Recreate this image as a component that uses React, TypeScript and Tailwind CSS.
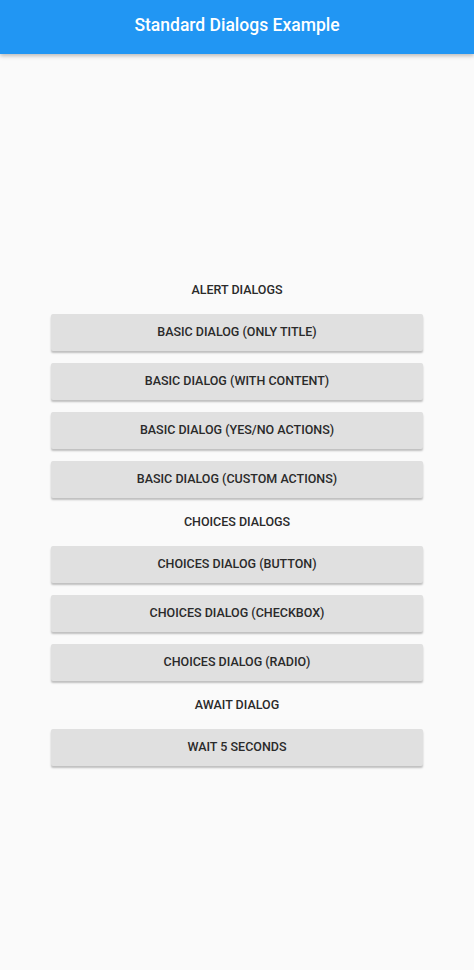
const groups = [
  {
    title: "ALERT DIALOGS",
    buttons: [
      "BASIC DIALOG (ONLY TITLE)",
      "BASIC DIALOG (WITH CONTENT)",
      "BASIC DIALOG (YES/NO ACTIONS)",
      "BASIC DIALOG (CUSTOM ACTIONS)",
    ],
  },
  {
    title: "CHOICES DIALOGS",
    buttons: ["CHOICES DIALOG (BUTTON)", "CHOICES DIALOG (CHECKBOX)", "CHOICES DIALOG (RADIO)"],
  },
  {
    title: "AWAIT DIALOG",
    buttons: ["WAIT 5 SECONDS"],
  },
];

export default function App() {
  return (
    <div className="min-h-[970px] bg-[#fafafa] flex flex-col" style={{ fontFamily: "Roboto, sans-serif" }}>
      <header className="h-[54px] bg-[#2196f3] flex items-center justify-center shadow-[0_2px_4px_rgba(0,0,0,0.25)] relative z-10">
        <h1 className="text-white text-[17.5px] font-medium pb-[4px]">Standard Dialogs Example</h1>
      </header>

      <main className="pt-[212px] px-[51px] flex flex-col">
        {groups.map((g) => (
          <div key={g.title} className="flex flex-col">
            <div className="h-12 flex items-center justify-center text-[12.5px] font-medium text-[#2a2a2a]">
              {g.title}
            </div>
            <div className="flex flex-col gap-3">
              {g.buttons.map((b) => (
                <button
                  key={b}
                  className="h-[37px] w-full bg-[#e0e0e0] rounded-[2px] text-[12.5px] font-medium text-[#2a2a2a] shadow-[0_2px_2px_rgba(0,0,0,0.24)]"
                >
                  {b}
                </button>
              ))}
            </div>
          </div>
        ))}
      </main>
    </div>
  );
}
